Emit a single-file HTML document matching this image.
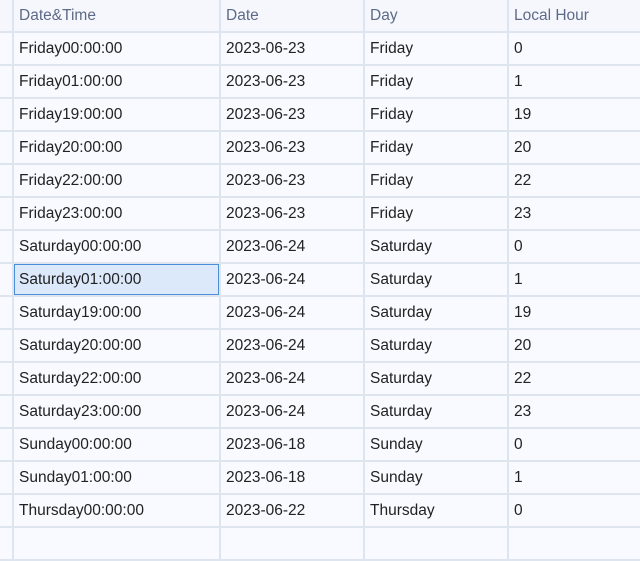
<!DOCTYPE html>
<html><head><style>
body{margin:0;width:640px;height:530px;overflow:hidden;background:#dfe5ef;font-family:"Liberation Sans",sans-serif;font-size:15.5px}
table{border-collapse:separate;border-spacing:2px;margin:-2px 0 0 -2px;table-layout:fixed;width:644px}
td{background:#f8faff;color:#222;height:31px;padding:1px 0 0 5px;white-space:nowrap;overflow:hidden;box-sizing:border-box}
tr.h td{color:#5d6b88;background:#f5f7fc}
td.s{background:#dce9fb;outline:1px solid #4a8fd8;outline-offset:-1px}
</style></head><body>
<table>
<colgroup><col style="width:12px"><col style="width:205px"><col style="width:142px"><col style="width:142px"><col style="width:131px"></colgroup>
<tr class="h"><td></td><td>Date&amp;Time</td><td>Date</td><td>Day</td><td>Local Hour</td></tr>
<tr><td></td><td>Friday00:00:00</td><td>2023-06-23</td><td>Friday</td><td>0</td></tr>
<tr><td></td><td>Friday01:00:00</td><td>2023-06-23</td><td>Friday</td><td>1</td></tr>
<tr><td></td><td>Friday19:00:00</td><td>2023-06-23</td><td>Friday</td><td>19</td></tr>
<tr><td></td><td>Friday20:00:00</td><td>2023-06-23</td><td>Friday</td><td>20</td></tr>
<tr><td></td><td>Friday22:00:00</td><td>2023-06-23</td><td>Friday</td><td>22</td></tr>
<tr><td></td><td>Friday23:00:00</td><td>2023-06-23</td><td>Friday</td><td>23</td></tr>
<tr><td></td><td>Saturday00:00:00</td><td>2023-06-24</td><td>Saturday</td><td>0</td></tr>
<tr><td></td><td class="s">Saturday01:00:00</td><td>2023-06-24</td><td>Saturday</td><td>1</td></tr>
<tr><td></td><td>Saturday19:00:00</td><td>2023-06-24</td><td>Saturday</td><td>19</td></tr>
<tr><td></td><td>Saturday20:00:00</td><td>2023-06-24</td><td>Saturday</td><td>20</td></tr>
<tr><td></td><td>Saturday22:00:00</td><td>2023-06-24</td><td>Saturday</td><td>22</td></tr>
<tr><td></td><td>Saturday23:00:00</td><td>2023-06-24</td><td>Saturday</td><td>23</td></tr>
<tr><td></td><td>Sunday00:00:00</td><td>2023-06-18</td><td>Sunday</td><td>0</td></tr>
<tr><td></td><td>Sunday01:00:00</td><td>2023-06-18</td><td>Sunday</td><td>1</td></tr>
<tr><td></td><td>Thursday00:00:00</td><td>2023-06-22</td><td>Thursday</td><td>0</td></tr>
<tr><td></td><td></td><td></td><td></td><td></td></tr>
</table>
</body></html>
